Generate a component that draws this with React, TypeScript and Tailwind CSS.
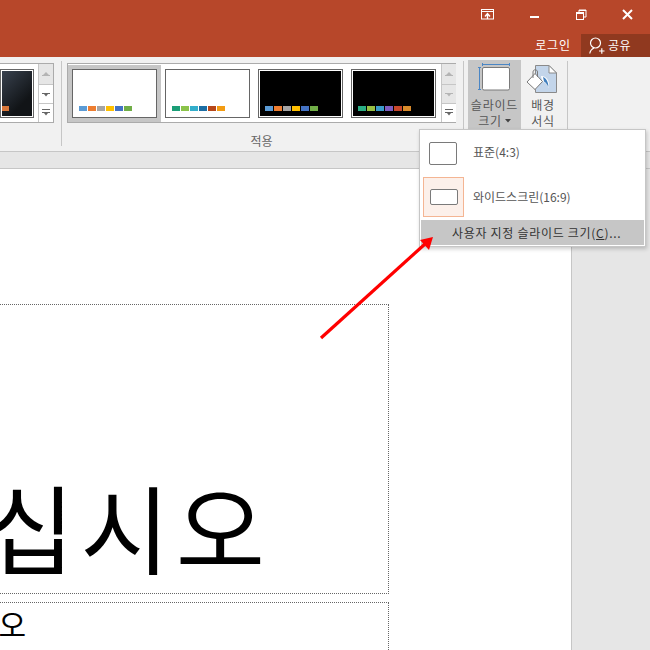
import React from 'react';

const FONT = "font-['Noto_Sans_CJK_KR','Liberation_Sans',sans-serif]";

const officeColors = ['#5b9bd5', '#ed7d31', '#a5a5a5', '#ffc000', '#4472c4', '#70ad47'];
const tealColors = ['#1b9e77', '#8bc34a', '#33aecb', '#1c6ea4', '#b7471a', '#f39c12'];
const darkAltColors = ['#2bae85', '#97bf43', '#3a9bc9', '#7d5cc0', '#c7472c', '#d98b2b'];

const Thumb = ({ colors, dark }: { colors: string[]; dark?: boolean }) => (
  <div className={`flex h-[49px] w-[85px] shrink-0 items-end gap-px border border-[#666] pb-[6px] pl-[6px] outline-1 -outline-offset-2 outline-white ${dark ? 'bg-black' : 'bg-white'}`}>
    {colors.map((c) => (
      <span key={c} className="h-[5px] w-2" style={{ backgroundColor: c }} />
    ))}
  </div>
);

const Arrow = ({ up, more, faded }: { up?: boolean; more?: boolean; faded?: boolean }) => (
  <svg width="9" height="9" viewBox="0 0 9 9" className={faded ? 'fill-[#b4b4b4]' : 'fill-[#666]'}>
    {more && <rect x="0" y="0" width="8" height="1" />}
    {up ? <path d="M4 2 7 5H8V6H0V5H1Z" /> : <path d="M0 3H8V4H6L4 6.5 2 4H0Z" />}
  </svg>
);

const ScrollCol = ({ faded }: { faded?: boolean }) => (
  <div className="flex h-[58px] w-[15px] shrink-0 flex-col border-l border-[#c6c6c6]">
    <div className="flex h-[21px] items-center justify-center border-b border-[#c6c6c6] bg-[#e6e6e6]">
      <Arrow up faded />
    </div>
    <div className={`flex h-[19px] items-center justify-center border-b border-[#c6c6c6] ${faded ? 'bg-[#e6e6e6]' : 'bg-white'}`}>
      <Arrow faded={faded} />
    </div>
    <div className="flex flex-1 items-center justify-center bg-white">
      <Arrow more />
    </div>
  </div>
);

export default function App() {
  return (
    <div className={`relative flex h-[650px] w-[650px] flex-col overflow-hidden bg-[#e6e6e6] ${FONT}`}>
      {/* title bar */}
      <div className="flex h-[57px] shrink-0 flex-col bg-[#b7472a] text-white">
        <div className="flex h-[33px] items-start justify-end">
          <div className="flex h-[29px] w-[46px] items-center justify-center">
            <svg width="14" height="11" viewBox="0 0 14 11" fill="none" stroke="white">
              <rect x="0.5" y="0.5" width="12" height="9.5" />
              <path d="M0 2.5H13" />
              <path d="M6.5 10V5M4 7.5 6.5 4.5 9 7.5" strokeWidth="1.4" />
            </svg>
          </div>
          <div className="flex h-[29px] w-[47px] items-center justify-center">
            <span className="mt-[5px] h-[2px] w-[9px] bg-white" />
          </div>
          <div className="flex h-[29px] w-[46px] items-center justify-center">
            <svg width="11" height="11" viewBox="0 0 11 11" fill="none" stroke="white">
              <rect x="0.5" y="3.5" width="7" height="7" />
              <path d="M3 3V1H10V8H8" />
              <path d="M0.5 4.5H7.5M3 1.5H10" />
            </svg>
          </div>
          <div className="flex h-[29px] w-[46px] items-center justify-center">
            <svg width="11" height="11" viewBox="0 0 11 11" stroke="white" strokeWidth="2">
              <path d="M1 1 10 10M10 1 1 10" />
            </svg>
          </div>
        </div>
        <div className="flex h-[24px] items-center justify-end">
          <span className="mr-[10px] text-[12px] tracking-[0.9px]">로그인</span>
          <div className="flex h-[23px] w-[69px] items-center gap-[3px] bg-[#90391f] pl-[8px] text-[12px] tracking-[0.4px]">
            <svg width="16" height="17" viewBox="0 0 16 17" fill="none" stroke="white" strokeWidth="1.2">
              <circle cx="6.5" cy="6" r="5" />
              <path d="M0.8 16.5C1.2 13.5 3 12 5 11M10 14H15.5M12.8 11.2V16.8" />
            </svg>
            <span>공유</span>
          </div>
        </div>
      </div>

      {/* ribbon */}
      <div className="flex h-[94px] shrink-0 items-start bg-[#f1f1f1]">
        <div className="mt-[6px] flex h-[60px] w-[54px] shrink-0 border-y border-r border-[#ababab] bg-white">
          <div className="flex w-[38px] shrink-0 justify-end pt-[5px] pr-[4px]">
            <div className="flex h-[49px] w-[34px] items-end border border-[#666] bg-[linear-gradient(135deg,#3a4350,#111417_70%)] pb-[6px] outline-1 -outline-offset-2 outline-white">
              <span className="h-[5px] w-2 bg-[#d9773a]" />
            </div>
          </div>
          <ScrollCol />
        </div>
        <div className="ml-[7px] mr-[5px] mt-[4px] h-[85px] w-px shrink-0 bg-[#c6c6c6]" />

        <div className="flex w-[389px] shrink-0 flex-col">
          <div className="mt-[6px] flex h-[60px] border border-[#ababab] bg-white">
            <div className="flex w-[373px] shrink-0 items-center gap-[8px] pl-[4px]">
              <div className="-ml-[4px] -mr-[4px] flex h-[57px] w-[93px] shrink-0 items-center justify-center bg-[#c6c6c6]">
                <Thumb colors={officeColors} />
              </div>
              <Thumb colors={tealColors} />
              <Thumb colors={officeColors} dark />
              <Thumb colors={darkAltColors} dark />
            </div>
            <ScrollCol faded />
          </div>
          <div className="mt-[9px] text-center text-[12px] leading-[18px] text-[#666]">적용</div>
        </div>

        <div className="ml-[7px] mr-[4px] mt-[4px] h-[85px] w-px shrink-0 bg-[#c6c6c6]" />

        <div className="mt-[3px] flex h-[70px] w-[53px] shrink-0 flex-col items-center bg-[#c6c6c6] text-[12px] leading-[16px] text-[#555]">
          <svg width="36" height="31" viewBox="0 0 36 31" className="ml-[8px] mt-[3px] shrink-0 self-start" fill="none">
            <path d="M6 1.5H34M6.5 0V3M33.5 0V3M3.5 4V27M2 4.5H5M2 26.5H5" stroke="#4a86c5" />
            <rect x="6.5" y="4.5" width="27" height="22.5" rx="1.5" fill="white" stroke="#7a7a7a" />
          </svg>
          <span className="mt-[3px] whitespace-nowrap tracking-[0.8px]">슬라이드</span>
          <span className="flex items-center gap-[3px] tracking-[0.8px]">
            크기
            <svg width="6" height="4" viewBox="0 0 6 4" className="fill-[#444]"><path d="M0 0H6L3 3.5Z" /></svg>
          </span>
        </div>
        <div className="mt-[3px] flex h-[70px] w-[44px] shrink-0 flex-col items-center text-[12px] leading-[16px] text-[#555]">
          <svg width="32" height="31" viewBox="0 0 32 31" className="ml-[5px] mt-[3px] shrink-0 self-start">
            <path d="M9.5 2.5H23L30.5 10V29.5H9.5Z" fill="#c3d5ea" stroke="#8a8a8a" />
            <path d="M23 2.5V10H30.5Z" fill="white" stroke="#8a8a8a" />
            <path d="M15 13C20 13 24 17 23 25C21 21 19 19 16 18Z" fill="white" />
            <path d="M17 14C20 15 22.500 19 22.500 24C21 21 19.500 19.500 18 18.500Z" fill="#3f7ebd" />
            <path d="M1 19 9 10.500 16.500 18.500 9 26.500Z" fill="white" stroke="#7a7a7a" />
            <path d="M7 15V9C7 6 11.500 6 11.500 9V14" stroke="#7a7a7a" fill="none" />
          </svg>
          <span className="mt-[3px] tracking-[0.8px]">배경</span>
          <span className="tracking-[0.8px]">서식</span>
        </div>
        <div className="ml-[2px] mt-[4px] h-[85px] w-px shrink-0 bg-[#c6c6c6]" />
      </div>

      {/* thumbnail strip */}
      <div className="h-[18px] shrink-0 border-y border-[#c6c6c6] bg-[#e6e6e6]" />

      {/* slide area */}
      <div className="flex min-h-0 flex-1">
        <div className="flex w-[572px] shrink-0 flex-col overflow-hidden border-r border-[#c6c6c6] bg-white pt-[135px]">
          <div className="flex h-[290px] w-[389px] shrink-0 items-end justify-end overflow-hidden border-y border-r border-dotted border-[#666] pb-[20px] pr-[117px]">
            <span className="whitespace-nowrap text-[97px] leading-none tracking-[6px] text-black">십시오</span>
          </div>
          <div className="mt-[8px] flex h-[80px] w-[389px] shrink-0 items-start justify-end overflow-hidden border-y border-r border-dotted border-[#666] pr-[362px]">
            <span className="whitespace-nowrap text-[30px] leading-[40px] text-black">오</span>
          </div>
        </div>
      </div>

      {/* slide size menu */}
      <div className="absolute left-[419px] top-[129px] flex h-[118px] w-[227px] flex-col border border-[#c6c6c6] bg-white px-[1px] pb-[1px] text-[12px] text-[#555] shadow-[1px_2px_4px_rgba(0,0,0,0.2)]">
        <div className="flex h-[46px] items-center pb-[2px] pl-[8px]">
          <span className="mt-[2px] h-[23px] w-[28px] rounded-[2px] border border-[#7a7a7a]" />
          <span className="ml-[16px]">표준(4:3)</span>
        </div>
        <div className="ml-[2px] mt-[1px] flex h-[40px] w-[41px] shrink-0 items-center justify-center whitespace-nowrap border border-[#f4b593] bg-[#fcf0ea]">
          <span className="h-[16px] w-[28px] shrink-0 rounded-[2px] border border-[#7a7a7a] bg-white" />
          <span className="absolute left-[53px]">와이드스크린(16:9)</span>
        </div>
        <div className="mt-[3px] flex h-[24px] flex-1 items-center bg-[#c6c6c6] pl-[31px] tracking-[0.7px] text-[#333]">
          <span>사용자 지정 슬라이드 크기(<span className="underline">C</span>)...</span>
        </div>
      </div>

      {/* callout arrow */}
      <svg className="pointer-events-none absolute left-[310px] top-[225px]" width="130" height="120" viewBox="0 0 130 120">
        <path d="M11 113 115 19" stroke="#ff0000" strokeWidth="3.2" fill="none" />
        <path d="M123 12 110 15 119 25Z" fill="#ff0000" />
      </svg>
    </div>
  );
}
